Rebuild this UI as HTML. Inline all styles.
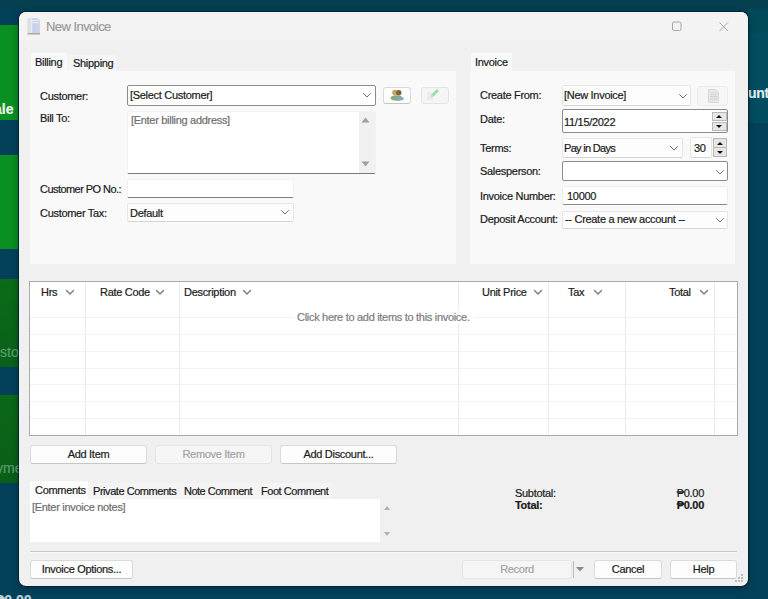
<!DOCTYPE html>
<html><head><meta charset="utf-8"><title>New Invoice</title>
<style>
*{box-sizing:border-box;margin:0;padding:0}
html,body{width:768px;height:599px;overflow:hidden}
body{position:relative;background:#03415a;font-family:"Liberation Sans",sans-serif;font-size:11px;letter-spacing:-0.3px;color:#1a1a1a;-webkit-text-stroke:0.2px}
.a{position:absolute}
.t{position:absolute;white-space:nowrap;line-height:14px;height:14px}
.g{color:#6d6d6d}
.bgband{position:absolute;left:0;width:768px}
.green{position:absolute;left:0;width:18px}
.bgt{position:absolute;color:#e8f2ee;font-weight:bold;font-size:15px;letter-spacing:0;white-space:nowrap}
#win{position:absolute;left:19px;top:12px;width:729px;height:574px;background:#f0f0f0;border-radius:7px;box-shadow:0 0 0 1px rgba(0,25,35,.6),0 1px 6px rgba(0,15,25,.55)}
#tb{position:absolute;left:0;top:0;width:729px;height:28px;background:#f3f3f3;border-radius:7px 7px 0 0}
.panel{position:absolute;background:#f9f9f9}
.tab{position:absolute;background:#f9f9f9}
.in{position:absolute;background:#fff;border:1px solid #ececec;border-bottom-color:#8a8a8a;border-radius:2px}
.cb{position:absolute;background:#fdfdfd;border:1px solid #e6e6e6;border-bottom-color:#d6d6d6;border-radius:2px}
.cbd{position:absolute;background:#fff;border:1px solid #8c8c8c;border-radius:2px}
.btn{position:absolute;background:#fdfdfd;border:1px solid #dadada;border-bottom-color:#c6c6c6;border-radius:3px;text-align:center;line-height:17px;white-space:nowrap}
.btn.dis{background:#f5f5f5;border-color:#e4e4e4;color:#a3a3a3}
svg{position:absolute;overflow:visible}
.chev{fill:none;stroke:#707070;stroke-width:1;stroke-linecap:round;stroke-linejoin:round}
.vl{position:absolute;width:1px;background:#ebebeb}
.hl{position:absolute;height:1px;background:#f2f2f2}
.spin{position:absolute;background:#e6e6e6;border:1px solid #b9b9b9}
</style></head><body>
<!-- background -->
<div class="bgband" style="top:0;height:9px;background:#04404f"></div>
<div class="a" style="left:748px;top:9px;width:20px;height:24px;background:#024a5a"></div>
<div class="a" style="left:748px;top:33px;width:20px;height:90px;background:#014c5f"></div>
<div class="green" style="top:25px;height:95px;background:#0a8f22"></div>
<div class="green" style="top:155px;height:94px;background:#0a8f22"></div>
<div class="green" style="top:279px;height:88px;background:linear-gradient(#0a6c16,#09601a)"></div>
<div class="green" style="top:395px;height:88px;background:linear-gradient(#0a6816,#095e18)"></div>
<div class="bgt" style="left:-6px;top:101px;font-size:14px;line-height:16px">ale</div>
<div class="bgt" style="left:0px;top:344px;color:#5c9e68;font-weight:normal;font-size:14px;line-height:16px">sto</div>
<div class="bgt" style="left:-4px;top:460px;color:#5c9e68;font-weight:normal;font-size:14px;line-height:16px">yme</div>
<div class="bgt" style="left:-5px;top:592px;color:#bdd0d8;font-weight:bold;font-size:14px;line-height:16px">₱0.00</div>
<div class="bgt" style="left:748px;top:85px;color:#dfeef2;font-size:14px;line-height:16px;letter-spacing:-0.3px">unt</div>

<div id="win">
<div id="tb"></div>

<!-- title bar -->
<svg class="a" style="left:8px;top:6px" width="14" height="17" viewBox="0 0 14 17">
<defs><linearGradient id="dg" x1="0" y1="0" x2="1" y2="0"><stop offset="0" stop-color="#dcdce2"/><stop offset="0.28" stop-color="#dfe0ea"/><stop offset="0.5" stop-color="#c6cef0"/><stop offset="1" stop-color="#d5d7de"/></linearGradient></defs>
<path d="M1.500 0h8.500l3 2.500v12.500h-12.500v-14z" fill="url(#dg)"/>
<rect x="4" y="0.500" width="0.700" height="14.500" fill="#f1f1f6"/>
<rect x="5" y="2" width="6.500" height="1" fill="#e9ebf2"/>
<rect x="5" y="4.200" width="6.500" height="1" fill="#eceef5"/>
<rect x="0.500" y="15.300" width="12.500" height="1.100" fill="#8e8e90"/>
</svg>
<div class="t" style="left:27px;top:7px;font-size:13px;letter-spacing:-0.55px;color:#9a9a9a;line-height:16px;height:16px">New Invoice</div>
<svg class="a" style="left:653px;top:9px" width="11" height="11" viewBox="0 0 11 11"><rect x="0.500" y="1" width="8.500" height="8.500" rx="1.500" fill="none" stroke="#a6a6a6" stroke-width="1"/></svg>
<svg class="a" style="left:700px;top:10px" width="10" height="10" viewBox="0 0 10 10"><path d="M0.500 0.500l8.500 8.500M9 0.500l-8.500 8.500" stroke="#a6a6a6" stroke-width="1" fill="none"/></svg>

<!-- Billing / Shipping tabs -->
<div class="tab" style="left:12px;top:41px;width:36px;height:19px"></div>
<div class="a" style="left:48px;top:43px;width:49px;height:17px;background:#f4f4f4"></div>
<div class="t" style="left:16px;top:43px">Billing</div>
<div class="t" style="left:54px;top:44px">Shipping</div>
<div class="panel" style="left:11px;top:59px;width:426px;height:193px"></div>

<div class="t" style="left:21px;top:77px">Customer:</div>
<div class="cbd" style="left:108px;top:73px;width:249px;height:21px"></div>
<div class="t" style="left:111px;top:76px">[Select Customer]</div>
<svg style="left:344px;top:81px" width="8" height="5" viewBox="0 0 8 5"><path class="chev" d="M0.500 0.500l3.500 3.500l3.500-3.500"/></svg>
<div class="btn" style="left:364px;top:75px;width:28px;height:17px"><svg style="left:6px;top:1px" width="15" height="12" viewBox="0 0 15 12"><ellipse cx="6.500" cy="9" rx="6" ry="2.800" fill="#7fae86"/><path d="M7 7.500l6.500 1v2.500l-6 .8z" fill="#8ea3bd"/><circle cx="5" cy="3.500" r="2.800" fill="#c8a45c"/><circle cx="8.800" cy="3.800" r="2.700" fill="#8b5e34"/></svg></div>
<div class="btn dis" style="left:402px;top:75px;width:28px;height:17px"><svg style="left:4px;top:0px" width="14" height="13" viewBox="0 0 14 13"><path d="M1 4h6v8h-6z" fill="#e9ece9"/><path d="M4.500 9.500l1-3l5.500-5.500l2 2l-5.500 5.500z" fill="#9fdc9f"/><path d="M4.500 9.500l1-3l2 2z" fill="#d8dcd8"/></svg></div>

<div class="t" style="left:21px;top:99px">Bill To:</div>
<div class="in" style="left:108px;top:99px;width:249px;height:63px;border-color:#f2f2f2;border-bottom-color:#7a7a7a"></div>
<div class="a" style="left:340px;top:100px;width:16px;height:61px;background:#f0f0f0"></div>
<div class="t g" style="left:112px;top:101px">[Enter billing address]</div>
<svg style="left:342px;top:105px" width="9" height="6" viewBox="0 0 9 6"><path d="M4.500 0.500l4 5h-8z" fill="#a0a0a0"/></svg>
<svg style="left:342px;top:149px" width="9" height="6" viewBox="0 0 9 6"><path d="M4.500 5.500l4-5h-8z" fill="#a0a0a0"/></svg>

<div class="t" style="left:21px;top:170px;letter-spacing:-0.55px">Customer PO No.:</div>
<div class="in" style="left:108px;top:167px;width:167px;height:19px;border-color:#f0f0f0;border-bottom-color:#7d7d7d"></div>
<div class="t" style="left:21px;top:194px">Customer Tax:</div>
<div class="cb" style="left:108px;top:191px;width:167px;height:19px"></div>
<div class="t" style="left:111px;top:194px">Default</div>
<svg style="left:262px;top:198px" width="8" height="5" viewBox="0 0 8 5"><path class="chev" d="M0.500 0.500l3.500 3.500l3.500-3.500"/></svg>

<!-- Invoice tab -->
<div class="tab" style="left:452px;top:41px;width:41px;height:19px"></div>
<div class="t" style="left:456px;top:43px">Invoice</div>
<div class="panel" style="left:451px;top:59px;width:265px;height:193px"></div>

<div class="t" style="left:461px;top:76px">Create From:</div>
<div class="cb" style="left:543px;top:73px;width:129px;height:21px"></div>
<div class="t" style="left:545px;top:76px">[New Invoice]</div>
<svg style="left:660px;top:82px" width="8" height="5" viewBox="0 0 8 5"><path class="chev" d="M0.500 0.500l3.500 3.500l3.500-3.500"/></svg>
<div class="btn dis" style="left:678px;top:74px;width:31px;height:20px;background:#f6f6f6;border-color:#ececec"><svg style="left:10px;top:2px" width="11" height="14" viewBox="0 0 11 14"><path d="M0.500 0.500h7l3 3v10h-10z" fill="#e6e6e6" stroke="#d9d9d9"/><path d="M2 5h7M2 7.500h7M2 10h7" stroke="#d2d2d2"/></svg></div>

<div class="t" style="left:461px;top:100px">Date:</div>
<div class="cbd" style="left:543px;top:97px;width:166px;height:24px"></div>
<div class="t" style="left:545px;top:103px">11/15/2022</div>

<div class="t" style="left:461px;top:129px">Terms:</div>
<div class="cb" style="left:543px;top:126px;width:121px;height:20px"></div>
<div class="t" style="left:545px;top:129px;letter-spacing:-0.7px">Pay in Days</div>
<svg style="left:651px;top:134px" width="8" height="5" viewBox="0 0 8 5"><path class="chev" d="M0.500 0.500l3.500 3.500l3.500-3.500"/></svg>
<div class="cb" style="left:671px;top:125px;width:22px;height:21px"></div>
<div class="t" style="left:675px;top:129px">30</div>


<div class="spin" style="left:693px;top:100px;width:15px;height:9px"></div>
<div class="spin" style="left:693px;top:110px;width:15px;height:9px"></div>
<svg style="left:697px;top:103px" width="6" height="3" viewBox="0 0 6 3"><path d="M3 0l3 3h-6z" fill="#111"/></svg>
<svg style="left:697px;top:113px" width="6" height="3" viewBox="0 0 6 3"><path d="M3 3l3-3h-6z" fill="#111"/></svg>
<div class="spin" style="left:694px;top:126px;width:14px;height:10px"></div>
<div class="spin" style="left:694px;top:135px;width:14px;height:10px"></div>
<svg style="left:698px;top:130px" width="6" height="3" viewBox="0 0 6 3"><path d="M3 0l3 3h-6z" fill="#111"/></svg>
<svg style="left:698px;top:139px" width="6" height="3" viewBox="0 0 6 3"><path d="M3 3l3-3h-6z" fill="#111"/></svg>
<div class="t" style="left:461px;top:152px">Salesperson:</div>
<div class="cbd" style="left:543px;top:149px;width:166px;height:20px"></div>
<svg style="left:697px;top:158px" width="8" height="5" viewBox="0 0 8 5"><path class="chev" d="M0.500 0.500l3.500 3.500l3.500-3.500"/></svg>

<div class="t" style="left:461px;top:177px">Invoice Number:</div>
<div class="in" style="left:543px;top:174px;width:166px;height:19px"></div>
<div class="t" style="left:548px;top:177px">10000</div>

<div class="t" style="left:461px;top:200px">Deposit Account:</div>
<div class="cb" style="left:543px;top:199px;width:166px;height:18px"></div>
<div class="t" style="left:546px;top:200px">-- Create a new account --</div>
<svg style="left:697px;top:206px" width="8" height="5" viewBox="0 0 8 5"><path class="chev" d="M0.500 0.500l3.500 3.500l3.500-3.500"/></svg>

<!-- table -->
<div class="a" style="left:10px;top:269px;width:709px;height:155px;background:#fff;border:1px solid #a9a9a9"></div>
<div class="vl" style="left:66px;top:270px;height:153px"></div>
<div class="vl" style="left:160px;top:270px;height:153px"></div>
<div class="vl" style="left:439px;top:270px;height:153px"></div>
<div class="vl" style="left:529px;top:270px;height:153px"></div>
<div class="vl" style="left:606px;top:270px;height:153px"></div>
<div class="vl" style="left:695px;top:270px;height:153px"></div>
<div class="hl" style="left:11px;top:305px;width:707px"></div>
<div class="hl" style="left:11px;top:322px;width:707px"></div>
<div class="hl" style="left:11px;top:339px;width:707px"></div>
<div class="hl" style="left:11px;top:356px;width:707px"></div>
<div class="hl" style="left:11px;top:372px;width:707px"></div>
<div class="hl" style="left:11px;top:389px;width:707px"></div>
<div class="hl" style="left:11px;top:406px;width:707px"></div>
<div class="t" style="left:22px;top:273px">Hrs</div>
<svg style="left:47px;top:278px" width="8" height="5" viewBox="0 0 8 5"><path class="chev" style="stroke-width:1.4;stroke:#7a7a7a" d="M0.500 0.500l3.500 3.500l3.500-3.500"/></svg>
<div class="t" style="left:81px;top:273px">Rate Code</div>
<svg style="left:137px;top:278px" width="8" height="5" viewBox="0 0 8 5"><path class="chev" style="stroke-width:1.4;stroke:#7a7a7a" d="M0.500 0.500l3.500 3.500l3.500-3.500"/></svg>
<div class="t" style="left:165px;top:273px">Description</div>
<svg style="left:224px;top:278px" width="8" height="5" viewBox="0 0 8 5"><path class="chev" style="stroke-width:1.4;stroke:#7a7a7a" d="M0.500 0.500l3.500 3.500l3.500-3.500"/></svg>
<div class="t" style="left:463px;top:273px">Unit Price</div>
<svg style="left:515px;top:278px" width="8" height="5" viewBox="0 0 8 5"><path class="chev" style="stroke-width:1.4;stroke:#7a7a7a" d="M0.500 0.500l3.500 3.500l3.500-3.500"/></svg>
<div class="t" style="left:549px;top:273px">Tax</div>
<svg style="left:575px;top:278px" width="8" height="5" viewBox="0 0 8 5"><path class="chev" style="stroke-width:1.4;stroke:#7a7a7a" d="M0.500 0.500l3.500 3.500l3.500-3.500"/></svg>
<div class="t" style="left:650px;top:273px">Total</div>
<svg style="left:681px;top:278px" width="8" height="5" viewBox="0 0 8 5"><path class="chev" style="stroke-width:1.4;stroke:#7a7a7a" d="M0.500 0.500l3.500 3.500l3.500-3.500"/></svg>
<div class="t g" style="left:274px;top:298px;background:#fff;padding:0 4px;color:#7b7b7b">Click here to add items to this invoice.</div>

<!-- buttons -->
<div class="btn" style="left:11px;top:433px;width:117px;height:19px">Add Item</div>
<div class="btn dis" style="left:136px;top:433px;width:117px;height:19px">Remove Item</div>
<div class="btn" style="left:261px;top:433px;width:117px;height:19px">Add Discount...</div>

<!-- comment tabs -->
<div class="a" style="left:69px;top:471px;width:243px;height:16px;background:#f4f4f4"></div>
<div class="tab" style="left:11px;top:469px;width:58px;height:19px;background:#fcfcfc"></div>
<div class="t" style="left:16px;top:471px">Comments</div>
<div class="t" style="left:74px;top:472px;letter-spacing:-0.45px">Private Comments</div>
<div class="t" style="left:165px;top:472px;letter-spacing:-0.5px">Note Comment</div>
<div class="t" style="left:242px;top:472px;letter-spacing:-0.45px">Foot Comment</div>
<div class="a" style="left:11px;top:487px;width:350px;height:43px;background:#fff"></div>
<div class="t g" style="left:13px;top:488px">[Enter invoice notes]</div>
<svg style="left:365px;top:494px" width="6" height="4" viewBox="0 0 6 4"><path d="M3 0l3 4h-6z" fill="#b0b0b0"/></svg>
<svg style="left:365px;top:520px" width="6" height="4" viewBox="0 0 6 4"><path d="M3 4l3-4h-6z" fill="#b0b0b0"/></svg>

<!-- totals -->
<div class="t" style="left:496px;top:474px">Subtotal:</div>
<div class="t" style="left:496px;top:486px;font-weight:bold">Total:</div>
<div class="t" style="right:44px;top:474px">₱0.00</div>
<div class="t" style="right:44px;top:486px;font-weight:bold">₱0.00</div>

<!-- separator & bottom buttons -->
<div class="a" style="left:11px;top:539px;width:707px;height:1px;background:#c9c9c9"></div>
<div class="a" style="left:11px;top:540px;width:707px;height:1px;background:#fafafa"></div>
<div class="btn" style="left:11px;top:548px;width:103px;height:19px">Invoice Options...</div>
<div class="btn dis" style="left:443px;top:548px;width:110px;height:19px">Record</div>
<div class="a" style="left:554px;top:549px;width:1px;height:17px;background:#bdbdbd"></div>
<svg style="left:557px;top:555px" width="8" height="5" viewBox="0 0 8 5"><path d="M0 0h8l-4 4.500z" fill="#8d8d8d"/></svg>
<div class="btn" style="left:575px;top:548px;width:68px;height:19px">Cancel</div>
<div class="btn" style="left:651px;top:548px;width:67px;height:19px">Help</div>
<!-- resize grip -->
<svg style="left:716px;top:562px" width="9" height="9" viewBox="0 0 9 9"><g fill="#bdbdbd"><rect x="6" y="0" width="2" height="2"/><rect x="3" y="3" width="2" height="2"/><rect x="6" y="3" width="2" height="2"/><rect x="0" y="6" width="2" height="2"/><rect x="3" y="6" width="2" height="2"/><rect x="6" y="6" width="2" height="2"/></g></svg>
</div>
</body></html>
